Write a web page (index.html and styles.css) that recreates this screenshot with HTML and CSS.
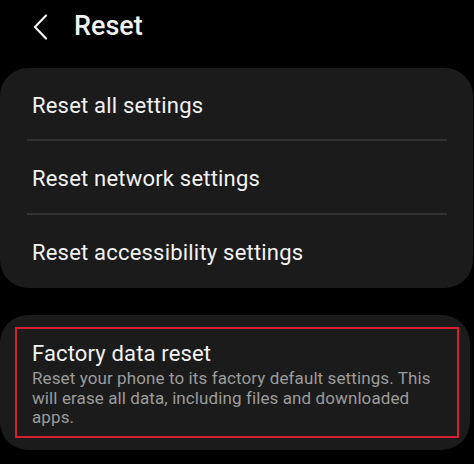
FILE: index.html
```html
<!DOCTYPE html>
<html>
<head>
<meta charset="utf-8">
<link rel="stylesheet" href="styles.css">
</head>
<body>
<header class="topbar">
  <span class="back">
    <svg width="16" height="26" viewBox="0 0 16 26"><polyline points="13,1.5 2,13 13,24.5" fill="none" stroke="#f2f2f2" stroke-width="2.2" stroke-linecap="round" stroke-linejoin="round"/></svg>
  </span>
  <h1 class="title">Reset</h1>
</header>
<section class="card list">
  <div class="row">Reset all settings</div>
  <div class="row">Reset network settings</div>
  <div class="row">Reset accessibility settings</div>
</section>
<section class="card factory">
  <div class="highlight">
    <div class="ftitle">Factory data reset</div>
    <div class="fdesc">Reset your phone to its factory default settings. This will erase all data, including files and downloaded apps.</div>
  </div>
</section>
</body>
</html>
```
FILE: styles.css
```css
html, body {
  margin: 0;
  padding: 0;
  background: #000;
}
body {
  width: 474px;
  height: 464px;
  overflow: hidden;
  font-family: Roboto, "Noto Sans", sans-serif;
  color: #f2f2f2;
}
.topbar {
  height: 52px;
  display: flex;
  align-items: center;
}
.back {
  display: flex;
  margin-left: 33px;
  margin-top: 2px;
}
.title {
  margin: 0 0 0 25px;
  font-size: 27px;
  font-weight: 500;
  letter-spacing: 0;
}
.card {
  background: #1b1b1b;
  border-radius: 28px;
  margin-right: 1px;
}
.list {
  margin-top: 16px;
  display: flex;
  flex-direction: column;
  padding: 0;
}
.row {
  height: 73.4px;
  display: flex;
  align-items: center;
  margin: 0 26px 0 27px;
  font-size: 22px;
  letter-spacing: 0.2px;
  padding: 3px 0 0 5px;
  box-sizing: border-box;
  border-bottom: 2px solid #333;
}
.row:last-child {
  border-bottom: none;
}
.factory {
  margin-top: 27px;
  padding: 12px 11px 12px 15px;
  margin-right: 4px;
}
.highlight {
  border: 2px solid #d3202c;
  padding: 12px 8px 12px 15px;
  height: 111px;
  box-sizing: border-box;
}
.ftitle {
  font-size: 22px;
  letter-spacing: 0.15px;
  line-height: 26px;
}
.fdesc {
  font-size: 17px;
  letter-spacing: 0.1px;
  line-height: 19.5px;
  color: #9c9c9c;
  margin-top: 2px;
}
```
